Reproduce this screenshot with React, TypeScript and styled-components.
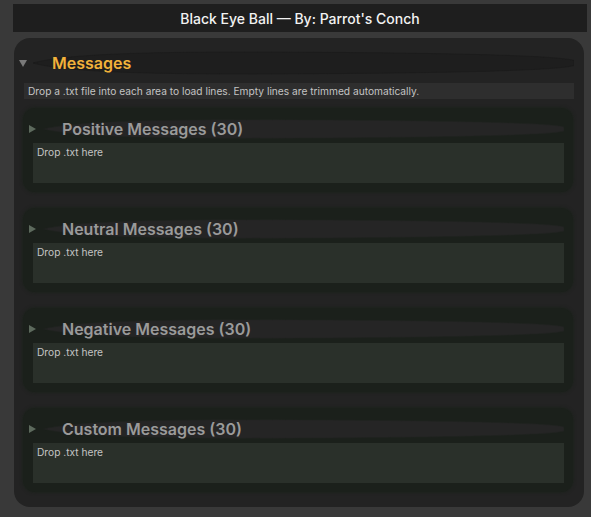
import React from "react";
import styled, { createGlobalStyle } from "styled-components";

const GlobalStyle = createGlobalStyle`
  html, body {
    margin: 0;
    padding: 0;
    background: #393939;
  }
  body {
    font-family: Inter, "Noto Sans", "Liberation Sans", sans-serif;
  }
`;

const groups = ["Positive", "Neutral", "Negative", "Custom"];

/** Tapered lens drawn behind a collapsing header. */
function Lens({ fill, stroke }: { fill: string; stroke: string }) {
  return (
    <LensSvg viewBox="0 0 100 20" preserveAspectRatio="none">
      <path
        d="M0 10 C 8 1, 30 1, 60 2 C 85 3, 97 5, 100 8 L 100 12 C 97 15, 85 17, 60 18 C 30 19, 8 19, 0 10 Z"
        fill={fill}
        stroke={stroke}
        strokeWidth="0.6"
        vectorEffect="non-scaling-stroke"
      />
    </LensSvg>
  );
}

function Group({ name }: { name: string }) {
  return (
    <SubPanel>
      <SubHeader>
        <Arrow dir="right" color="#5d6a5d" />
        <LensSlot>
          <Lens fill="#252525" stroke="#202420" />
        </LensSlot>
        <SubTitle>{name} Messages (30)</SubTitle>
      </SubHeader>
      <DropArea>Drop .txt here</DropArea>
    </SubPanel>
  );
}

export default function App() {
  return (
    <Page>
      <GlobalStyle />
      <TitleBar>Black Eye Ball — By: Parrot's Conch</TitleBar>
      <Panel>
        <MainHeader>
          <Arrow dir="down" color="#7a7a7a" />
          <LensSlot>
            <Lens fill="#1e1e1e" stroke="#1a1a1a" />
          </LensSlot>
          <MainTitle>Messages</MainTitle>
        </MainHeader>
        <Hint>
          Drop a .txt file into each area to load lines. Empty lines are trimmed
          automatically.
        </Hint>
        <Groups>
          {groups.map((g) => (
            <Group key={g} name={g} />
          ))}
        </Groups>
      </Panel>
    </Page>
  );
}

const Page = styled.div`
  width: 591px;
  height: 517px;
  box-sizing: border-box;
  padding: 4px 4px 0 13px;
  display: flex;
  flex-direction: column;
`;

const TitleBar = styled.div`
  height: 28px;
  background: #1e1e1e;
  color: #f2f2f2;
  font-size: 14px;
  font-weight: 500;
  display: flex;
  align-items: center;
  justify-content: center;
`;

const Panel = styled.div`
  margin: 6px 3px 0 1px;
  height: 469px;
  box-sizing: border-box;
  background: #232323;
  border-radius: 16px;
  padding: 12px 10px 0 5px;
  display: flex;
  flex-direction: column;
`;

const MainHeader = styled.div`
  position: relative;
  height: 26px;
  display: flex;
  align-items: center;
`;

const LensSlot = styled.div`
  position: absolute;
  left: 14px;
  right: 0;
  top: 0;
  bottom: 0;
  z-index: 0;
`;

const LensSvg = styled.svg`
  width: 100%;
  height: 100%;
  display: block;
`;

const Arrow = styled.span<{ dir: "down" | "right"; color: string }>`
  width: 0;
  height: 0;
  position: relative;
  z-index: 1;
  ${(p) =>
    p.dir === "down"
      ? `border-left: 4px solid transparent;
         border-right: 4px solid transparent;
         border-top: 7px solid ${p.color};`
      : `border-top: 4px solid transparent;
         border-bottom: 4px solid transparent;
         border-left: 7px solid ${p.color};`}
`;

const MainTitle = styled.span`
  position: relative;
  z-index: 1;
  margin-left: 25px;
  color: #f2b23a;
  font-size: 16px;
  font-weight: 600;
`;

const Hint = styled.div`
  margin: 7px 0 0 5px;
  height: 16px;
  background: #2e2e2e;
  color: #c4c4c4;
  font-size: 10.2px;
  padding-left: 4px;
  display: flex;
  align-items: center;
`;

const Groups = styled.div`
  margin: 9px 1px 0 4px;
  display: flex;
  flex-direction: column;
  gap: 16px;
`;

const SubPanel = styled.div`
  height: 84px;
  box-sizing: border-box;
  background: #1b201b;
  border-radius: 12px;
  box-shadow: 0 0 3px 1px #1d221d;
  padding: 10px 9px 9px 6px;
  display: flex;
  flex-direction: column;
`;

const SubHeader = styled.div`
  position: relative;
  height: 22px;
  display: flex;
  align-items: center;
  margin-bottom: 3px;
`;

const SubTitle = styled.span`
  position: relative;
  z-index: 1;
  margin-left: 26px;
  color: #9a9a9a;
  font-size: 16px;
  font-weight: 600;
`;

const DropArea = styled.div`
  flex: 1;
  margin-left: 4px;
  background: #2a302a;
  color: #c4c4c4;
  font-size: 10.2px;
  padding: 3px 4px 0;
`;
